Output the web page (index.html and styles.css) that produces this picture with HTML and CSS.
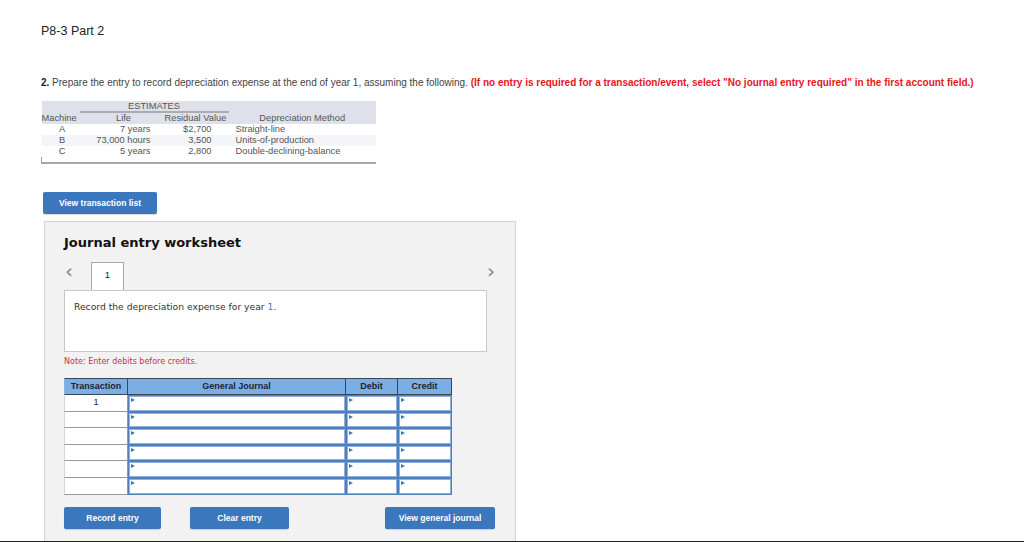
FILE: index.html
```html
<!DOCTYPE html>
<html lang="en">
<head>
  <meta charset="UTF-8">
  <title>P8-3 Part 2</title>
  <link rel="stylesheet" href="styles.css">
</head>
<body>

  <div class="page">
    <h1 class="title">P8-3 Part 2</h1>

    <p class="question"><b>2.</b> Prepare the entry to record depreciation expense at the end of year 1, assuming the following. <span class="warn">(If no entry is required for a transaction/event, select "No journal entry required" in the first account field.)</span></p>

    <table class="estimates">
      <colgroup>
        <col class="w-mach">
        <col class="w-life">
        <col class="w-res">
        <col>
      </colgroup>
      <tr class="head">
        <th></th>
        <th colspan="2"><div class="est-label">ESTIMATES</div></th>
        <th></th>
      </tr>
      <tr class="head">
        <th class="c-mach">Machine</th>
        <th class="c-life">Life</th>
        <th class="c-res">Residual Value</th>
        <th class="c-meth">Depreciation Method</th>
      </tr>
      <tr>
        <td class="c-mach">A</td>
        <td class="c-life">7 years</td>
        <td class="c-res">$2,700</td>
        <td class="c-meth">Straight-line</td>
      </tr>
      <tr class="alt">
        <td class="c-mach">B</td>
        <td class="c-life">73,000 hours</td>
        <td class="c-res">3,500</td>
        <td class="c-meth">Units-of-production</td>
      </tr>
      <tr>
        <td class="c-mach">C</td>
        <td class="c-life">5 years</td>
        <td class="c-res">2,800</td>
        <td class="c-meth">Double-declining-balance</td>
      </tr>
      <tr class="foot"><td colspan="4"></td></tr>
    </table>

    <button class="btn btn-list">View transaction list</button>

    <div class="worksheet">
      <h2>Journal entry worksheet</h2>

      <div class="tabs">
        <span class="arrow">&lsaquo;</span>
        <div class="tab">1</div>
        <span class="arrow arrow-right">&rsaquo;</span>
      </div>

      <div class="task">Record the depreciation expense for year <span class="num">1</span>.</div>

      <p class="note">Note: Enter debits before credits.</p>

      <div class="jtable">
        <div class="jh">Transaction</div>
        <div class="jh">General Journal</div>
        <div class="jh">Debit</div>
        <div class="jh">Credit</div>

        <div class="jt">1</div><div class="ji"></div><div class="ji"></div><div class="ji"></div>
        <div class="jt"></div><div class="ji"></div><div class="ji"></div><div class="ji"></div>
        <div class="jt"></div><div class="ji"></div><div class="ji"></div><div class="ji"></div>
        <div class="jt"></div><div class="ji"></div><div class="ji"></div><div class="ji"></div>
        <div class="jt"></div><div class="ji"></div><div class="ji"></div><div class="ji"></div>
        <div class="jt"></div><div class="ji"></div><div class="ji"></div><div class="ji"></div>
      </div>

      <div class="actions">
        <button class="btn btn-record">Record entry</button>
        <button class="btn btn-clear">Clear entry</button>
        <button class="btn btn-journal">View general journal</button>
      </div>
    </div>
  </div>

  <div class="bottom-bar"></div>

</body>
</html>
```

FILE: styles.css
```css
body {
  font-family: "Liberation Sans", Arial, sans-serif;
  margin: 0;
  background-color: #fff;
  color: #333;
  overflow: hidden;
}

.page {
  padding: 23px 0 0 41px;
}

.title {
  margin: 0;
  font-size: 12.5px;
  line-height: 16px;
  font-weight: normal;
  color: #222;
}

.question {
  margin: 37px 0 0;
  font-size: 10px;
  line-height: 14px;
  color: #444;
}

.question b {
  color: #222;
}

.warn {
  color: #e8151b;
  font-weight: bold;
}

.estimates {
  margin-top: 11px;
  width: 335px;
  table-layout: fixed;
  border-collapse: collapse;
  font-size: 9.3px;
  color: #555;
  background-color: #fff;
}

.w-mach { width: 41px; }
.w-life { width: 70px; }
.w-res { width: 64px; }

.estimates th,
.estimates td {
  padding: 0;
  height: 11px;
  line-height: 11px;
  font-weight: normal;
  white-space: nowrap;
}

.estimates .head {
  background-color: #dfe1ea;
}

.estimates .alt {
  background-color: #f4f5f8;
}

.est-label {
  margin: 0 -12px 0 -3px;
  border-bottom: 2px solid #a9abb5;
  line-height: 10px;
  text-align: center;
}

.c-mach {
  text-align: center;
}

th.c-mach {
  text-align: left;
}

td.c-life {
  text-align: right;
  padding-right: 2px;
}

td.c-res {
  text-align: right;
  padding-right: 5px;
}

th.c-life,
th.c-res,
th.c-meth {
  text-align: center;
  padding-left: 12px;
}

td.c-meth {
  text-align: left;
  padding-left: 19px;
}

.estimates .foot td {
  height: 5px;
  border-bottom: 2px solid #a5a7ae;
  border-left: 1px solid #a5a7ae;
}

.btn {
  display: block;
  height: 22px;
  padding: 0;
  border: none;
  border-radius: 2px;
  background-color: #3a77bd;
  color: #fff;
  font-family: "Liberation Sans", Arial, sans-serif;
  font-size: 8.5px;
  font-weight: bold;
  cursor: pointer;
  box-shadow: 0 1px 1px rgba(0,0,0,0.15);
}

.btn-list {
  width: 114px;
  margin: 28px 0 0 2px;
}

.worksheet {
  width: 451px;
  margin: 7px 0 0 3px;
  padding: 13px 0 12px 19px;
  background-color: #f2f2f2;
  border: 1px solid #d2d2d2;
  border-bottom: none;
}

.worksheet h2 {
  margin: 0;
  font-family: "DejaVu Sans", Verdana, sans-serif;
  font-size: 13px;
  line-height: 16px;
  color: #111;
}

.tabs {
  display: flex;
  align-items: flex-start;
  width: 431px;
  margin-top: 11px;
  height: 28px;
}

.arrow {
  font-family: "DejaVu Sans", Verdana, sans-serif;
  font-size: 20px;
  line-height: 18px;
  color: #888;
  width: 26px;
  padding-left: 1px;
}

.arrow-right {
  margin-left: auto;
  width: auto;
  padding: 0;
}

.tab {
  width: 33px;
  height: 28px;
  box-sizing: border-box;
  border: 1px solid #a8a8a8;
  border-bottom: none;
  background-color: #fff;
  margin-bottom: -1px;
  position: relative;
  z-index: 1;
  text-align: center;
  font-family: "Liberation Sans", Arial, sans-serif;
  font-size: 9.5px;
  line-height: 24px;
  color: #222;
}

.task {
  width: 421px;
  height: 50px;
  padding-top: 10px;
  border: 1px solid #c8c8c8;
  background-color: #fff;
  font-family: "DejaVu Sans", Verdana, sans-serif;
  font-size: 9.2px;
  line-height: 12px;
  color: #333;
  text-indent: 9px;
}

.num {
  color: #3a77bd;
}

.note {
  margin: 4px 0 0;
  font-family: "DejaVu Sans", Verdana, sans-serif;
  font-size: 8px;
  line-height: 12px;
  color: #c0334d;
}

.jtable {
  display: grid;
  grid-template-columns: 64px 218px 52px 54px;
  grid-template-rows: 17px;
  grid-auto-rows: 16.6px;
  margin-top: 10px;
  width: 388px;
}

.jh {
  background-color: #7aaee4;
  border: 1px solid #3c4656;
  border-left: none;
  font-size: 9px;
  font-weight: bold;
  line-height: 15px;
  text-align: center;
  color: #1d2430;
}

.jh:first-child {
  border-left: 1px solid #8fb6e0;
}

.jt {
  background-color: #fff;
  border-bottom: 1px solid #999;
  border-right: 1px solid #999;
  border-left: 1px solid #d6d6d6;
  font-size: 9px;
  line-height: 14px;
  text-align: center;
  color: #222;
}

.ji {
  position: relative;
  background-color: #fff;
  border: 1px solid #4f80bd;
  box-shadow: inset 0 0 0 1px #8fb0da;
  box-sizing: border-box;
}

.ji::before {
  content: "";
  position: absolute;
  left: 2px;
  top: 2px;
  border-left: 4px solid #3a77bd;
  border-top: 2px solid transparent;
  border-bottom: 2px solid transparent;
}

.actions {
  display: flex;
  margin-top: 12px;
}

.btn-record {
  width: 97px;
}

.btn-clear {
  width: 99px;
  margin-left: 29px;
}

.btn-journal {
  width: 110px;
  margin-left: 96px;
}

.bottom-bar {
  height: 2px;
  background-color: #222;
}
```
